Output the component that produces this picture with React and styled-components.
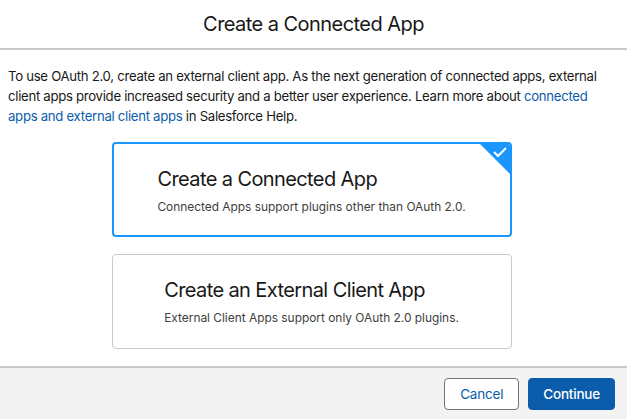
import React from "react";
import styled, { createGlobalStyle } from "styled-components";

const GlobalStyle = createGlobalStyle`
  html, body {
    margin: 0;
    padding: 0;
    background: #fff;
  }
  body {
    font-family: Inter, "Liberation Sans", sans-serif;
    color: #181818;
  }
`;

const Modal = styled.div`
  width: 627px;
  height: 419px;
  display: flex;
  flex-direction: column;
  background: #fff;
`;

const Header = styled.header`
  height: 48px;
  display: flex;
  align-items: center;
  justify-content: center;
  border-bottom: 2px solid #c9c9c9;
`;

const Title = styled.h1`
  margin: 0;
  font-size: 20px;
  font-weight: 400;
  letter-spacing: -0.55px;
  color: #181818;
`;

const Body = styled.div`
  flex: 1;
  padding: 16px 8px 0 8px;
`;

const Intro = styled.p`
  margin: 0;
  font-size: 13.2px;
  line-height: 20px;
  letter-spacing: -0.3px;
`;

const Link = styled.a`
  color: #0b5cab;
  text-decoration: none;
`;

const Options = styled.div`
  display: flex;
  flex-direction: column;
  align-items: center;
  gap: 17px;
  margin-top: 16px;
  padding-right: 4px;
`;

const Card = styled.div`
  position: relative;
  width: 400px;
  height: 95px;
  box-sizing: border-box;
  border: ${(p) => (p.$selected ? "2px solid #1b96ff" : "1px solid #c9c9c9")};
  border-radius: 4px;
  display: flex;
  align-items: center;
  justify-content: center;
  overflow: hidden;
`;

const CardContent = styled.div`
  display: flex;
  flex-direction: column;
  gap: 8px;
  margin-top: ${(p) => (p.$selected ? "2px" : "0")};
`;

const CardTitle = styled.div`
  font-size: 20px;
  letter-spacing: -0.6px;
  color: #181818;
`;

const CardText = styled.div`
  font-size: 11.9px;
  color: #3e3e3c;
`;

const Corner = styled.div`
  position: absolute;
  top: 0;
  right: 0;
  width: 0;
  height: 0;
  border-top: 30px solid #1b96ff;
  border-left: 30px solid transparent;
`;

const Check = styled.svg`
  position: absolute;
  top: 2px;
  right: 2px;
`;

const Footer = styled.footer`
  height: 51px;
  border-top: 2px solid #c9c9c9;
  background: #f3f3f3;
  display: flex;
  align-items: center;
  justify-content: flex-end;
  gap: 9px;
  padding-right: 12px;
`;

const Button = styled.button`
  height: 32px;
  padding: 0 ${(p) => (p.$brand ? "14px" : "15px")};
  border-radius: 4px;
  font-family: Inter, "Liberation Sans", sans-serif;
  font-size: 13.5px;
  letter-spacing: -0.2px;
  border: 1px solid ${(p) => (p.$brand ? "#0b5cab" : "#747474")};
  background: ${(p) => (p.$brand ? "#0b5cab" : "#fff")};
  color: ${(p) => (p.$brand ? "#fff" : "#0b5cab")};
  font-weight: ${(p) => (p.$brand ? 500 : 400)};
`;

const App = () => {
  return (
    <Modal>
      <GlobalStyle />
      <Header>
        <Title>Create a Connected App</Title>
      </Header>
      <Body>
        <Intro>
          To use OAuth 2.0, create an external client app. As the next generation of connected
          apps, external client apps provide increased security and a better user experience.
          Learn more about <Link href="#">connected apps and external client apps</Link> in
          Salesforce Help.
        </Intro>
        <Options>
          <Card $selected>
            <Corner />
            <Check width="16" height="12" viewBox="0 0 16 12">
              <path d="M2 6 L6 10 L14 2" fill="none" stroke="#fff" strokeWidth="2" />
            </Check>
            <CardContent $selected>
              <CardTitle>Create a Connected App</CardTitle>
              <CardText>Connected Apps support plugins other than OAuth 2.0.</CardText>
            </CardContent>
          </Card>
          <Card>
            <CardContent>
              <CardTitle>Create an External Client App</CardTitle>
              <CardText>External Client Apps support only OAuth 2.0 plugins.</CardText>
            </CardContent>
          </Card>
        </Options>
      </Body>
      <Footer>
        <Button>Cancel</Button>
        <Button $brand>Continue</Button>
      </Footer>
    </Modal>
  );
};

export default App;
